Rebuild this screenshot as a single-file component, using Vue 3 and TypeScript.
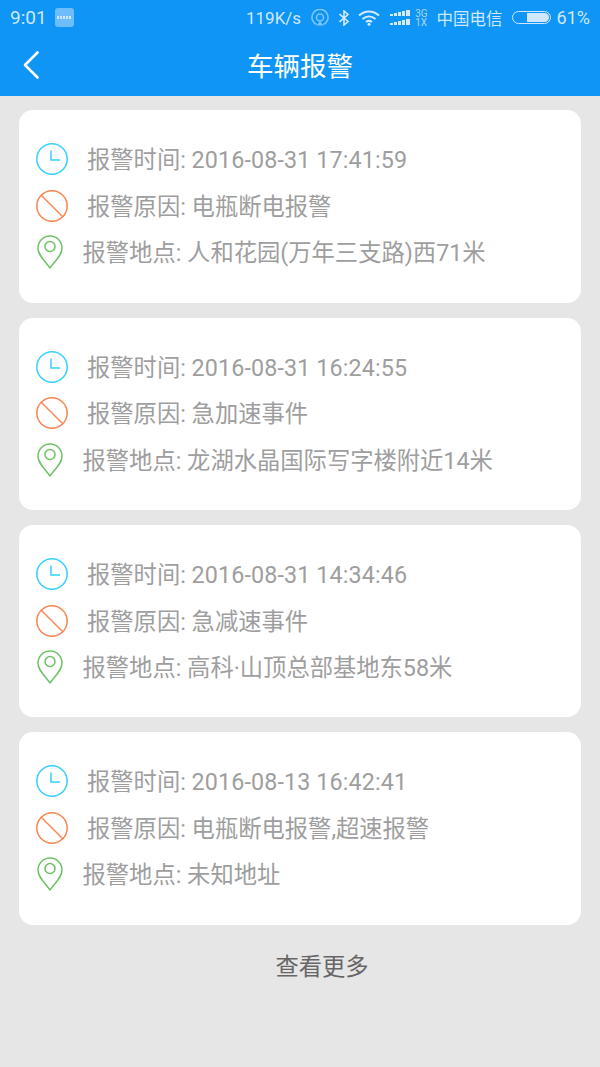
<template>
  <div class="page">
    <header class="header">
      <div class="status">
        <span class="time">9:01</span>
        <span class="notice"><i></i></span>
        <span class="speed">119K/s</span>
        <svg class="st-icon cloud" width="18" height="17" viewBox="0 0 18 17" fill="none" stroke="#85c6fa">
          <path d="M5.500 15.500a8 8 0 1 1 7 0" stroke-width="1.500" />
          <circle cx="9" cy="8.500" r="3.500" stroke-width="1.500" />
          <path d="M5.500 16.500h7L9 12.500z" fill="#85c6fa" stroke="none" />
        </svg>
        <svg class="st-icon bt" width="12" height="16" viewBox="0 0 12 16" fill="none" stroke="#d5ebfd" stroke-width="1.600">
          <path d="M1.500 4.200l8.500 7.300-4 3.500V1l4 3.500-8.500 7.300" />
        </svg>
        <svg class="st-icon wifi" width="22" height="16" viewBox="0 0 22 16" fill="none" stroke="#d5ebfd" stroke-width="2">
          <path d="M1 5.500c6-5.500 14-5.500 20 0M4.500 9c4-3.500 9-3.500 13 0M8 12c2-1.500 4-1.500 6 0" />
          <circle cx="11" cy="14.300" r="1.500" fill="#d5ebfd" stroke="none" />
        </svg>
        <svg class="st-icon sig" width="21" height="15" viewBox="0 0 21 15" fill="#d5ebfd">
          <rect x="0" y="4" width="3" height="2" /><rect x="4" y="3" width="3" height="3" /><rect x="8" y="2" width="3" height="4" /><rect x="12" y="1" width="3" height="5" /><rect x="16" y="0" width="4" height="6" />
          <rect x="0" y="13" width="3" height="2" /><rect x="4" y="12" width="3" height="3" /><rect x="8" y="11" width="3" height="4" /><rect x="12" y="10" width="3" height="5" /><rect x="16" y="9" width="4" height="6" />
        </svg>
        <span class="net"><b>3G</b><b>1X</b></span>
        <span class="carrier">中国电信</span>
        <span class="battery"><i></i></span>
        <span class="percent">61%</span>
      </div>
      <div class="titlebar">
        <svg class="back" width="18" height="30" viewBox="0 0 18 30" fill="none" stroke="#fff" stroke-width="2.600" stroke-linecap="round" stroke-linejoin="round">
          <path d="M15.500 2.500L3 15l12.500 12.500" />
        </svg>
        <h1 class="title">车辆报警</h1>
      </div>
    </header>

    <main class="list">
      <section v-for="item in alarms" :key="item.time" class="card">
        <div class="row">
          <svg class="icon" width="32" height="32" viewBox="0 0 32 32" fill="none" stroke="#35d0fb" stroke-width="1.500">
            <circle cx="16" cy="16" r="15.200" />
            <path d="M15 7.500v9.500h9" />
          </svg>
          <span class="text">报警时间: <span class="stamp">{{ item.time }}</span></span>
        </div>
        <div class="row">
          <svg class="icon" width="32" height="32" viewBox="0 0 32 32" fill="none" stroke="#fb8552" stroke-width="1.500">
            <circle cx="16" cy="16" r="15.200" />
            <path d="M5 5l22 22" />
          </svg>
          <span class="text">报警原因: {{ item.reason }}</span>
        </div>
        <div class="row">
          <svg class="icon pin" width="26" height="34" viewBox="0 0 26 34" fill="none" stroke="#6cc265" stroke-width="1.500">
            <path d="M13 33C7 25 1 20 1 13a12 12 0 0 1 24 0C25 20 19 25 13 33z" stroke-linejoin="round" />
            <circle cx="13" cy="11.500" r="5" />
          </svg>
          <span class="text place">报警地点: {{ item.place }}</span>
        </div>
      </section>
      <div class="more">查看更多</div>
    </main>
  </div>
</template>

<script setup lang="ts">
interface Alarm {
  time: string
  reason: string
  place: string
}

const alarms: Alarm[] = [
  { time: '2016-08-31 17:41:59', reason: '电瓶断电报警', place: '人和花园(万年三支路)西71米' },
  { time: '2016-08-31 16:24:55', reason: '急加速事件', place: '龙湖水晶国际写字楼附近14米' },
  { time: '2016-08-31 14:34:46', reason: '急减速事件', place: '高科·山顶总部基地东58米' },
  { time: '2016-08-13 16:42:41', reason: '电瓶断电报警,超速报警', place: '未知地址' },
]
</script>

<style>
html,
body {
  margin: 0;
  background: #e6e6e6;
}
</style>

<style scoped>
.page {
  width: 600px;
  height: 1067px;
  overflow: hidden;
  background: #e6e6e6;
  font-family: Roboto, "Noto Sans CJK SC", sans-serif;
}

.header {
  height: 96px;
  background: #0e95f6;
}

.status {
  height: 35px;
  display: flex;
  align-items: center;
  padding: 0 10px;
  color: #cfe8fd;
  font-size: 18px;
}

.time {
  font-size: 19px;
}

.notice {
  width: 19px;
  height: 19px;
  margin-left: 8px;
  border-radius: 3px;
  background: #6cbdf9;
  display: flex;
  align-items: center;
  justify-content: center;
}

.notice i {
  width: 14px;
  height: 3px;
  background: repeating-linear-gradient(90deg, #cfe8fd 0 2px, transparent 2px 3px);
}

.speed {
  margin-left: auto;
  font-size: 17px;
}

.st-icon {
  flex-shrink: 0;
}

.cloud {
  margin-left: 10px;
}

.bt {
  margin-left: 9px;
}

.wifi {
  margin-left: 8px;
}

.sig {
  margin-left: 10px;
}

.net {
  display: flex;
  flex-direction: column;
  margin-left: 4px;
  font-size: 10px;
  line-height: 9px;
  color: #a9d7fb;
}

.net b {
  font-weight: 400;
}

.carrier {
  margin-left: 9px;
  font-size: 16.500px;
}

.battery {
  width: 39px;
  height: 13px;
  margin-left: 9px;
  box-sizing: border-box;
  border: 1.500px solid #cfe8fd;
  border-radius: 7px;
  padding: 1px;
  display: flex;
  justify-content: flex-end;
  overflow: hidden;
}

.battery i {
  width: 22px;
  border-radius: 0 5px 5px 0;
  background: #cfe8fd;
}

.percent {
  margin-left: 6px;
}

.titlebar {
  height: 61px;
  display: flex;
  align-items: center;
  justify-content: center;
  position: relative;
}

.back {
  position: absolute;
  left: 22px;
  top: 15px;
}

.title {
  margin: -2px 0 0;
  color: #fff;
  font-size: 26.500px;
  font-weight: 400;
}

.list {
  display: flex;
  flex-direction: column;
  gap: 15px;
  padding: 14.200px 19px 0;
}

.card {
  height: 192.400px;
  box-sizing: border-box;
  padding: 24.800px 17px 0;
  background: #fff;
  border-radius: 14px;
  display: flex;
  flex-direction: column;
}

.row {
  height: 46.500px;
  display: flex;
  align-items: center;
  flex-shrink: 0;
}

.icon {
  flex-shrink: 0;
  margin-top: 2px;
}

.icon.pin {
  margin-left: 0.500px;
}

.text {
  margin-left: 19px;
  color: #9e9e9e;
  font-size: 23.300px;
  white-space: nowrap;
}

.text.place {
  margin-left: 20px;
}

.stamp {
  letter-spacing: 0.120px;
}

.more {
  margin-top: 8px;
  padding-left: 44px;
  text-align: center;
  color: #666;
  font-size: 23.300px;
}
</style>
